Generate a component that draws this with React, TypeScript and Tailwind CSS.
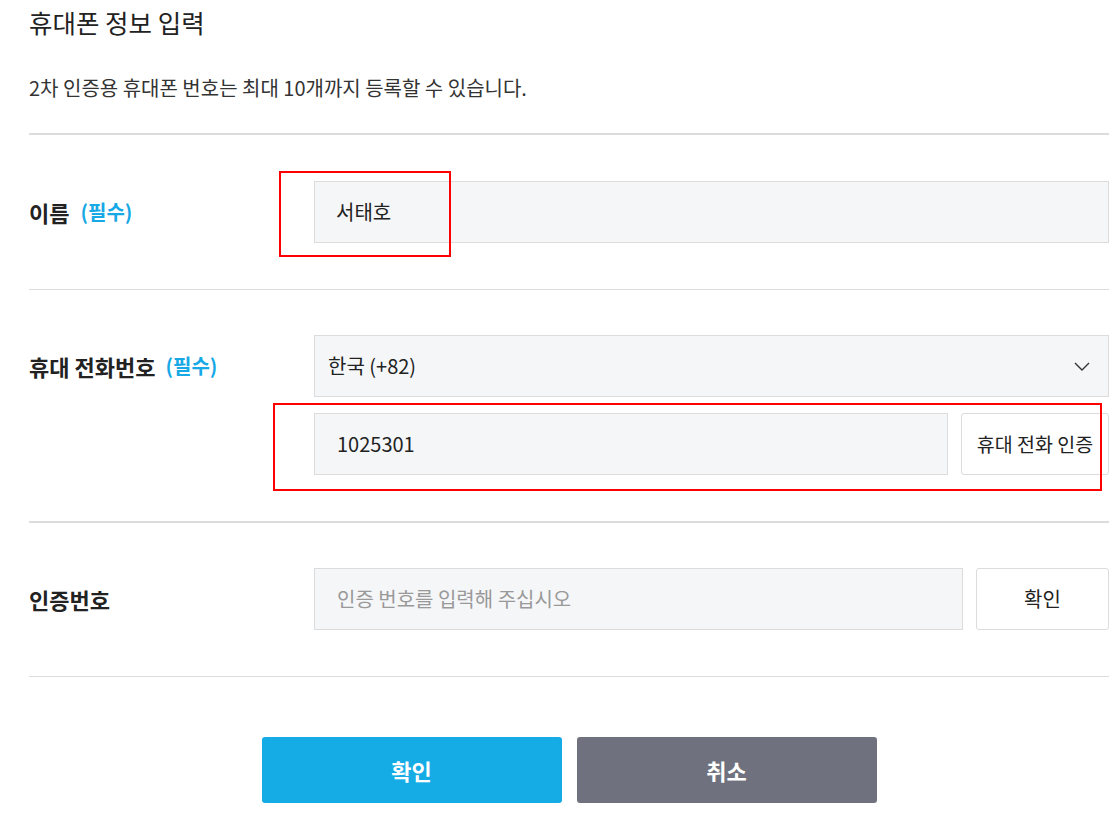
import React from "react";

const font = { fontFamily: '"Noto Sans CJK KR", "Noto Sans", sans-serif' };

export default function App() {
  return (
    <div className="bg-white w-[1118px] h-[813px] overflow-hidden text-[#222]" style={font}>
      <div className="relative ml-[29px] w-[1080px] pt-[4px]">
        <h1 className="text-[25.5px] leading-[36px] font-normal text-[#222]">휴대폰 정보 입력</h1>
        <p className="mt-[34px] text-[20px] leading-[28px] text-[#333]">
          2차 인증용 휴대폰 번호는 최대 10개까지 등록할 수 있습니다.
        </p>

        <div className="mt-[31px] border-t-2 border-[#dcdcdc]" />

        {/* Name row */}
        <div className="flex items-center pt-[46px] pb-[46px] border-b border-[#dcdcdc]">
          <div className="w-[285px] flex items-center">
            <span className="text-[22px] font-bold text-[#222]">이름</span>
            <span className="ml-[11px] text-[20px] font-bold text-[#17a8e6]">(필수)</span>
          </div>
          <div className="flex-1 h-[62px] bg-[#f5f6f8] border border-[#dcdcdc] flex items-center pl-[21px] text-[20px] text-[#222]">
            서태호
          </div>
        </div>

        {/* Phone row */}
        <div className="flex items-start pt-[45px] pb-[46px] border-b-2 border-[#dcdcdc]">
          <div className="w-[285px] h-[62px] flex items-center">
            <span className="text-[22px] font-bold text-[#222]">휴대 전화번호</span>
            <span className="ml-[10px] text-[20px] font-bold text-[#17a8e6]">(필수)</span>
          </div>
          <div className="flex-1 flex flex-col gap-[16px]">
            <div className="h-[62px] bg-[#f5f6f8] border border-[#dcdcdc] flex items-center justify-between pl-[13px] pr-[18px] text-[20px] text-[#222]">
              <span>한국 (+82)</span>
              <svg width="16" height="9" viewBox="0 0 16 9" fill="none">
                <path d="M1 1L8 8L15 1" stroke="#333" strokeWidth="1.4" />
              </svg>
            </div>
            <div className="flex gap-[13px]">
              <div className="flex-1 h-[62px] bg-[#f5f6f8] border border-[#dcdcdc] flex items-center pl-[22px] text-[20px] text-[#222]">
                1025301
              </div>
              <button className="w-[148px] h-[62px] bg-white border border-[#dcdcdc] rounded-[3px] text-[19.5px] text-[#222] whitespace-nowrap">
                휴대 전화 인증
              </button>
            </div>
          </div>
        </div>

        {/* Verification row */}
        <div className="flex items-center pt-[45px] pb-[46px] border-b border-[#dcdcdc]">
          <div className="w-[285px] flex items-center">
            <span className="text-[22px] font-bold text-[#222]">인증번호</span>
          </div>
          <div className="flex-1 flex gap-[13px]">
            <div className="flex-1 h-[62px] bg-[#f5f6f8] border border-[#dcdcdc] flex items-center pl-[22px] text-[20px] text-[#999]">
              인증 번호를 입력해 주십시오
            </div>
            <button className="w-[133px] h-[62px] bg-white border border-[#dcdcdc] rounded-[3px] text-[20px] text-[#222]">
              확인
            </button>
          </div>
        </div>

        {/* Action buttons */}
        <div className="mt-[60px] flex justify-center gap-[15px]">
          <button className="w-[300px] h-[66px] rounded-[3px] bg-[#15ace6] text-white text-[22px] font-bold">확인</button>
          <button className="w-[300px] h-[66px] rounded-[3px] bg-[#6f727e] text-white text-[22px] font-bold">취소</button>
        </div>

        {/* Annotation boxes */}
        <div className="absolute left-[250px] top-[171px] w-[172px] h-[86px] border-2 border-[#ff0000]" />
        <div className="absolute left-[244px] top-[403px] w-[829px] h-[88px] border-2 border-[#ff0000]" />
      </div>
    </div>
  );
}
